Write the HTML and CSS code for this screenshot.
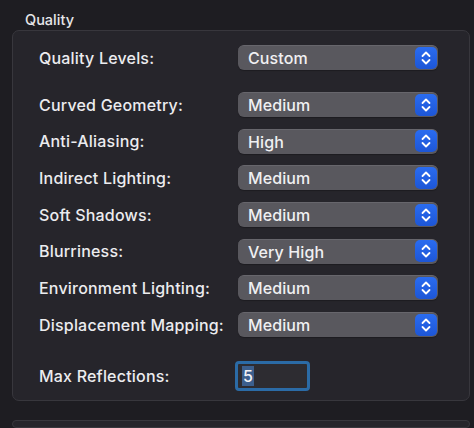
FILE: index.html
```html
<!DOCTYPE html>
<html>
<head>
<meta charset="utf-8">
<link rel="stylesheet" href="styles.css">
</head>
<body>
<div class="window">
  <div class="section-title">Quality</div>
  <div class="panel">
    <div class="row first">
      <div class="label">Quality Levels:</div>
      <div class="popup"><span class="value">Custom</span><span class="stepper"><svg width="22" height="22" viewBox="0 0 22 22"><path d="M7.5 9 L11 5.5 L14.5 9 M7.5 13 L11 16.5 L14.5 13" fill="none" stroke="#fff" stroke-width="1.8" stroke-linecap="round" stroke-linejoin="round"/></svg></span></div>
    </div>
    <div class="group">
      <div class="row">
        <div class="label">Curved Geometry:</div>
        <div class="popup"><span class="value">Medium</span><span class="stepper"><svg width="22" height="22" viewBox="0 0 22 22"><path d="M7.5 9 L11 5.5 L14.5 9 M7.5 13 L11 16.5 L14.5 13" fill="none" stroke="#fff" stroke-width="1.8" stroke-linecap="round" stroke-linejoin="round"/></svg></span></div>
      </div>
      <div class="row">
        <div class="label">Anti-Aliasing:</div>
        <div class="popup"><span class="value">High</span><span class="stepper"><svg width="22" height="22" viewBox="0 0 22 22"><path d="M7.5 9 L11 5.5 L14.5 9 M7.5 13 L11 16.5 L14.5 13" fill="none" stroke="#fff" stroke-width="1.8" stroke-linecap="round" stroke-linejoin="round"/></svg></span></div>
      </div>
      <div class="row">
        <div class="label">Indirect Lighting:</div>
        <div class="popup"><span class="value">Medium</span><span class="stepper"><svg width="22" height="22" viewBox="0 0 22 22"><path d="M7.5 9 L11 5.5 L14.5 9 M7.5 13 L11 16.5 L14.5 13" fill="none" stroke="#fff" stroke-width="1.8" stroke-linecap="round" stroke-linejoin="round"/></svg></span></div>
      </div>
      <div class="row">
        <div class="label">Soft Shadows:</div>
        <div class="popup"><span class="value">Medium</span><span class="stepper"><svg width="22" height="22" viewBox="0 0 22 22"><path d="M7.5 9 L11 5.5 L14.5 9 M7.5 13 L11 16.5 L14.5 13" fill="none" stroke="#fff" stroke-width="1.8" stroke-linecap="round" stroke-linejoin="round"/></svg></span></div>
      </div>
      <div class="row">
        <div class="label">Blurriness:</div>
        <div class="popup"><span class="value">Very High</span><span class="stepper"><svg width="22" height="22" viewBox="0 0 22 22"><path d="M7.5 9 L11 5.5 L14.5 9 M7.5 13 L11 16.5 L14.5 13" fill="none" stroke="#fff" stroke-width="1.8" stroke-linecap="round" stroke-linejoin="round"/></svg></span></div>
      </div>
      <div class="row">
        <div class="label">Environment Lighting:</div>
        <div class="popup"><span class="value">Medium</span><span class="stepper"><svg width="22" height="22" viewBox="0 0 22 22"><path d="M7.5 9 L11 5.5 L14.5 9 M7.5 13 L11 16.5 L14.5 13" fill="none" stroke="#fff" stroke-width="1.8" stroke-linecap="round" stroke-linejoin="round"/></svg></span></div>
      </div>
      <div class="row">
        <div class="label">Displacement Mapping:</div>
        <div class="popup"><span class="value">Medium</span><span class="stepper"><svg width="22" height="22" viewBox="0 0 22 22"><path d="M7.5 9 L11 5.5 L14.5 9 M7.5 13 L11 16.5 L14.5 13" fill="none" stroke="#fff" stroke-width="1.8" stroke-linecap="round" stroke-linejoin="round"/></svg></span></div>
      </div>
    </div>
    <div class="row last">
      <div class="label">Max Reflections:</div>
      <div class="field"><span class="sel">5</span></div>
    </div>
  </div>
  <div class="panel next"></div>
</div>
</body>
</html>
```

FILE: styles.css
```css
html, body {
  margin: 0;
  padding: 0;
  background: #1e1d22;
  width: 474px;
  height: 428px;
  overflow: hidden;
  font-family: Inter, "Liberation Sans", sans-serif;
  color: #ececef;
}

.window {
  display: flex;
  flex-direction: column;
  padding: 0 4px 0 12px;
}

.section-title {
  font-size: 14.5px;
  font-weight: 500;
  line-height: 16px;
  padding: 12px 0 2px 13px;
  color: #e6e6e9;
  height: 16px;
}

.panel {
  background: #26252b;
  border: 1px solid #38373d;
  border-radius: 7px;
  padding: 14px 0 9px 26px;
  display: flex;
  flex-direction: column;
  height: 346px;
  box-sizing: content-box;
}

.panel.next {
  margin-top: 19px;
  height: 6px;
  padding: 0;
}

.group {
  display: flex;
  flex-direction: column;
  gap: 11.7px;
  margin-top: 22px;
}

.row {
  display: flex;
  align-items: center;
}

.label {
  width: 199px;
  font-size: 16px;
  font-weight: 500;
  letter-spacing: 0.2px;
}

.popup {
  width: 200px;
  height: 25px;
  box-sizing: border-box;
  background: #59585e;
  border-radius: 6px;
  border-top: 1px solid #67666c;
  display: flex;
  align-items: center;
  justify-content: space-between;
  padding: 0 1px 0 10px;
  box-shadow: 0 1px 1px rgba(0,0,0,0.25);
}

.value {
  font-size: 16px;
  font-weight: 500;
  color: #f0f0f2;
  letter-spacing: 0.1px;
}

.stepper {
  width: 22px;
  height: 22px;
  background: linear-gradient(#2a6cf0, #1d56d6);
  border-radius: 5px;
  display: flex;
  margin-top: -1px;
}

.row.last {
  margin-top: 23.5px;
}

.field {
  margin-left: -3px;
  width: 75px;
  height: 30px;
  box-sizing: border-box;
  border: 3px solid #2b6ba6;
  border-radius: 4px;
  background: #2d2c31;
  display: flex;
  align-items: center;
  padding-left: 4px;
}

.sel {
  background: #3c5f8d;
  color: #f2f2f5;
  font-size: 16px;
  font-weight: 500;
  line-height: 20px;
  padding: 0 1px;
}
```
